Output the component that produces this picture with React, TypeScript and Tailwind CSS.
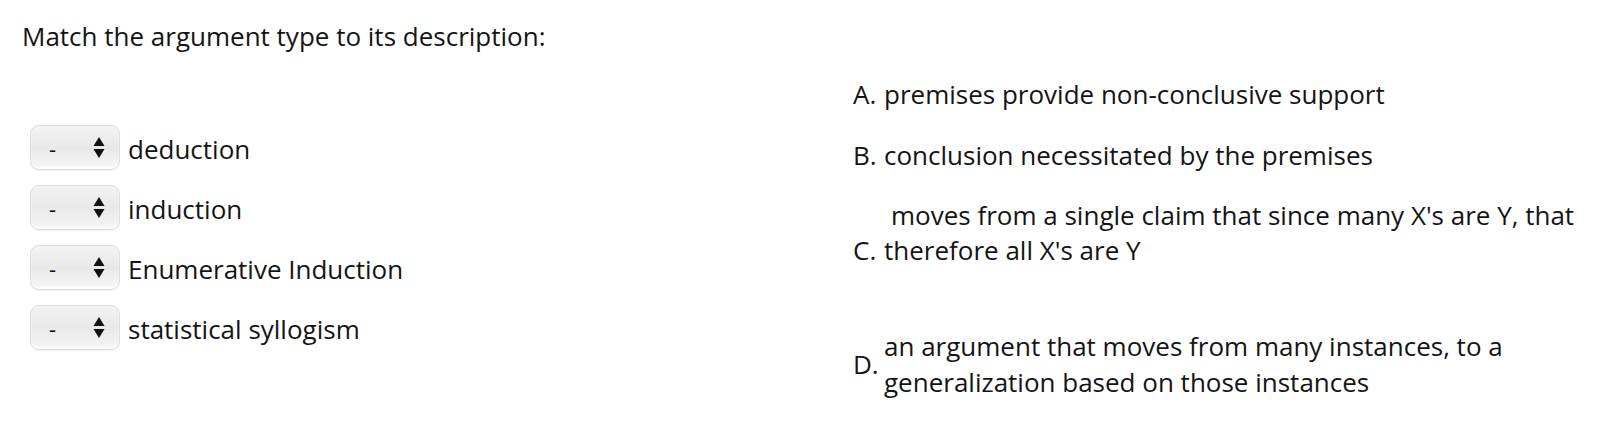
import { Fragment } from 'react'

const terms = ['deduction', 'induction', 'Enumerative Induction', 'statistical syllogism']

function ArrowPair() {
  return (
    <svg width="12" height="22" viewBox="0 0 12 22" className="shrink-0">
      <path d="M6 0 L11.5 9 L0.5 9 Z" fill="#111" />
      <path d="M0.5 12 L11.5 12 L6 21 Z" fill="#111" />
    </svg>
  )
}

function MatchSelect() {
  return (
    <div className="relative flex h-[45px] w-[90px] shrink-0 items-center justify-between rounded-[9px] border border-[#dcdcdc] bg-gradient-to-b from-[#f3f3f3] via-[#e8e8e8] to-[#f6f6f6] pl-[18px] pr-[14px] shadow-[inset_0_-2px_2px_rgba(255,255,255,0.95),0_1px_1px_rgba(0,0,0,0.06)]">
      <span className="text-[22px] leading-none text-[#111]">-</span>
      <ArrowPair />
    </div>
  )
}

export default function App() {
  return (
    <div className="min-h-[440px] bg-white pl-[22px] pt-[19px] text-[#141414] [font-family:'Open_Sans',sans-serif]">
      <p className="text-[26px] leading-[34px]">Match the argument type to its description:</p>

      <div className="mt-[11px] flex">
        {/* left: dropdown per term */}
        <div className="flex w-[831px] shrink-0 flex-col gap-[15px] pl-[8px] pt-[61px]">
          {terms.map((t) => (
            <div key={t} className="flex items-center gap-[8px]">
              <MatchSelect />
              <span className="pt-[3px] text-[26px] leading-[34px]">{t}</span>
            </div>
          ))}
        </div>

        {/* right: lettered descriptions */}
        <div className="grid grid-cols-[31px_auto] text-[26px] leading-[35px]">
          <Fragment>
            <div className="py-[13px]">A.</div>
            <div className="py-[13px]">premises provide non-conclusive support</div>
          </Fragment>
          <Fragment>
            <div className="py-[13px]">B.</div>
            <div className="py-[13px]">conclusion necessitated by the premises</div>
          </Fragment>
          <Fragment>
            <div className="self-end pt-[13px] pb-[14px]">C.</div>
            <div className="pt-[12px] pb-[14px]">
              <div className="pl-[7px]">moves from a single claim that since many X's are Y, that</div>
              <div>therefore all X's are Y</div>
            </div>
          </Fragment>
          <Fragment>
            <div className="mt-[33px] self-center py-[13px]">D.</div>
            <div className="mt-[33px] py-[13px] leading-[36px]">
              <div>an argument that moves from many instances, to a</div>
              <div>generalization based on those instances</div>
            </div>
          </Fragment>
        </div>
      </div>
    </div>
  )
}
